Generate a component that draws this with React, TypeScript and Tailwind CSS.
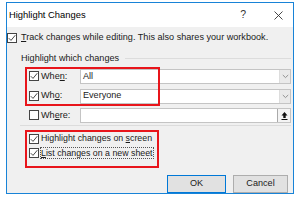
import React from "react";

const font = { fontFamily: '"Liberation Sans", Arial, sans-serif' };

function Check({ checked = true }: { checked?: boolean }) {
  return (
    <span className="w-[10px] h-[10px] border border-[#444] bg-white flex items-center justify-center shrink-0">
      {checked && (
        <svg width="8" height="8" viewBox="0 0 8 8">
          <path d="M0.8 4.2 L3 6.4 L7.3 1.2" fill="none" stroke="#333" strokeWidth="0.9" />
        </svg>
      )}
    </span>
  );
}

function Row({
  label,
  value,
  checked,
  upload,
}: {
  label: React.ReactNode;
  value?: string;
  checked: boolean;
  upload?: boolean;
}) {
  return (
    <div className="flex items-center h-[15px]">
      <div className="w-[51px] flex items-center pl-[22px] gap-[2px]">
        <Check checked={checked} />
        <span className="whitespace-nowrap">{label}</span>
      </div>
      <div className="ml-[22px] flex-1 h-[15px] border border-[#c4c4c4] bg-white flex items-center">
        <span className="flex-1 pl-[2px] text-[#222]">{value}</span>
        {upload ? (
          <span className="w-[13px] h-[13px] border-l border-[#aaa] bg-[#f4f4f4] flex items-center justify-center">
            <svg width="9" height="10" viewBox="0 0 9 10">
              <path d="M4.5 1 L1.5 4.5 H3.3 V7 H5.7 V4.5 H7.5 Z" fill="#111" />
              <rect x="1.5" y="8" width="6" height="1" fill="#111" />
            </svg>
          </span>
        ) : (
          <span className="w-[11px] h-[13px] border-l border-[#ddd] bg-[#eaeaea] flex items-center justify-center">
            <svg width="7" height="5" viewBox="0 0 7 5">
              <path d="M0.8 1 L3.5 3.6 L6.2 1" fill="none" stroke="#888" strokeWidth="0.9" />
            </svg>
          </span>
        )}
      </div>
    </div>
  );
}

export default function App() {
  return (
    <div className="w-[300px] h-[202px] bg-white pt-[2px] pl-[6px] text-[9.1px] text-[#1a1a1a]" style={font}>
      <div className="relative w-[288px] h-[192px] border border-[#1883d7] bg-[#f0f0f0] flex flex-col">
        {/* title bar */}
        <div className="h-[24px] bg-white flex items-center pl-[2px] pr-[10px] shrink-0">
          <span className="text-[9.4px] flex-1 text-black">Highlight Changes</span>
          <span className="text-[10.5px] text-[#333] mr-[28px]">?</span>
          <svg width="9" height="9" viewBox="0 0 9 9">
            <path d="M0.5 0.5 L8.5 8.5 M8.5 0.5 L0.5 8.5" stroke="#333" strokeWidth="0.9" />
          </svg>
        </div>

        <div className="flex flex-col pr-[2px]">
          <div className="flex items-center h-[13px] mt-[4px] gap-[4px]">
            <Check />
            <span className="whitespace-nowrap">
              <u>T</u>rack changes while editing. This also shares your workbook.
            </span>
          </div>

          <div className="flex items-center h-[13px] mt-[8px] pl-[14px] gap-[6px]">
            <span className="whitespace-nowrap">Highlight which changes</span>
            <span className="flex-1 h-px bg-[#dcdcdc]" />
          </div>

          <div className="flex flex-col gap-[4.5px] mt-[4px]">
            <Row label={<>Whe<u>n</u>:</>} value="All" checked />
            <Row label={<>Wh<u>o</u>:</>} value="Everyone" checked />
            <Row label={<>Wh<u>e</u>re:</>} checked={false} upload />
          </div>

          <div className="h-px bg-[#dcdcdc] ml-[13px] mt-[2px]" />

          <div className="flex flex-col gap-[4px] mt-[8px] pl-[22px] text-[8.8px]">
            <div className="flex items-center h-[10px] gap-[2px]">
              <Check />
              <span className="whitespace-nowrap">
                Highlight changes on <u>s</u>creen
              </span>
            </div>
            <div className="flex items-center h-[10px] gap-[2px]">
              <Check />
              <span className="whitespace-nowrap outline outline-1 outline-dotted outline-[#555] leading-[10px]">
                <u>L</u>ist changes on a new sheet
              </span>
            </div>
          </div>

          <div className="flex justify-end gap-[7px] mt-[17px] pr-[3px]">
            <button className="w-[59px] h-[18px] border border-[#0078d7] bg-[#e1e1e1] text-[9.1px]">OK</button>
            <button className="w-[55px] h-[18px] border border-[#adadad] bg-[#e1e1e1] text-[9.1px]">Cancel</button>
          </div>
        </div>

        {/* annotation boxes */}
        <div className="absolute left-[18px] top-[64px] w-[135px] h-[39px] border-2 border-[#e8151b]" />
        <div className="absolute left-[18px] top-[127px] w-[134px] h-[38px] border-2 border-[#e8151b]" />
      </div>
    </div>
  );
}
